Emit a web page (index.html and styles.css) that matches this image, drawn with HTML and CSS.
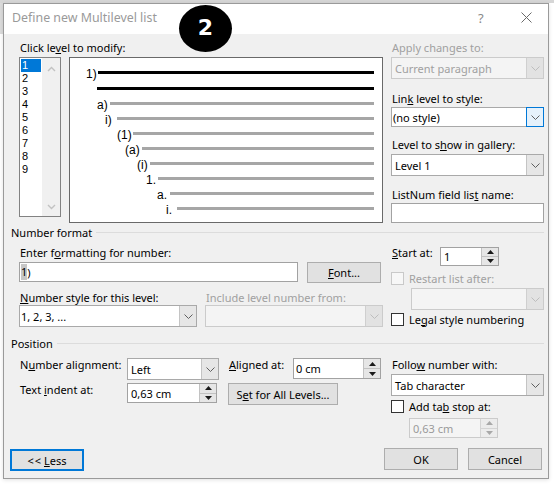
FILE: index.html
```html
<!DOCTYPE html>
<html lang="en">
<head>
<meta charset="utf-8">
<title>Define new Multilevel list</title>
<link rel="stylesheet" href="styles.css">
</head>
<body>
<div class="screen">
<div class="dialog">
  <div class="titlebar">
    <span class="title">Define new Multilevel list</span>
    <span class="tb-help">?</span>
    <span class="tb-close"><svg width="11" height="11" viewBox="0 0 11 11"><path d="M0.5 0.5 L10.5 10.5 M10.5 0.5 L0.5 10.5"/></svg></span>
  </div>
  <div class="badge">2</div>

  <div class="body">
    <div class="top">
      <div class="top-left">
        <div class="lbl">Click le<u>v</u>el to modify:</div>
        <div class="top-row">
          <div class="levels">
            <ul class="level-items">
              <li class="sel">1</li><li>2</li><li>3</li><li>4</li><li>5</li><li>6</li><li>7</li><li>8</li><li>9</li>
            </ul>
            <div class="vscroll">
              <svg class="sb-chev" width="9" height="6" viewBox="0 0 9 6"><polyline points="1,5 4.5,1.5 8,5"/></svg>
              <svg class="sb-chev" width="9" height="6" viewBox="0 0 9 6"><polyline points="1,1 4.5,4.5 8,1"/></svg>
            </div>
          </div>
          <div class="preview">
            <div class="pv-row r1"><span class="pv-num w12">1)</span><i class="pv-line black"></i></div>
            <div class="pv-row r2"><i class="pv-line black"></i></div>
            <div class="pv-row r3"><span class="pv-num w13">a)</span><i class="pv-line"></i></div>
            <div class="pv-row r4"><span class="pv-num w12">i)</span><i class="pv-line"></i></div>
            <div class="pv-row r5"><span class="pv-num w16">(1)</span><i class="pv-line"></i></div>
            <div class="pv-row r6"><span class="pv-num w17">(a)</span><i class="pv-line"></i></div>
            <div class="pv-row r7"><span class="pv-num w13">(i)</span><i class="pv-line"></i></div>
            <div class="pv-row r8"><span class="pv-num w12">1.</span><i class="pv-line"></i></div>
            <div class="pv-row r9"><span class="pv-num w13">a.</span><i class="pv-line"></i></div>
            <div class="pv-row r10"><span class="pv-num w11">i.</span><i class="pv-line"></i></div>
          </div>
        </div>
      </div>

      <div class="top-right">
        <div class="lbl dis">Apply changes to:</div>
        <div class="select dis apply-sel"><span class="val">Current paragraph</span><span class="dd"><svg class="chev" width="9" height="5" viewBox="0 0 9 5"><polyline points="0.5,0.5 4.5,4.5 8.5,0.5"/></svg></span></div>
        <div class="lbl link-lbl">Lin<u>k</u> level to style:</div>
        <div class="select link-sel"><span class="val tight">(no style)</span><span class="dd hot"><svg class="chev" width="9" height="5" viewBox="0 0 9 5"><polyline points="0.5,0.5 4.5,4.5 8.5,0.5"/></svg></span></div>
        <div class="lbl gallery-lbl">Level to s<u>h</u>ow in gallery:</div>
        <div class="select gallery-sel"><span class="val">Level 1</span><span class="dd"><svg class="chev" width="9" height="5" viewBox="0 0 9 5"><polyline points="0.5,0.5 4.5,4.5 8.5,0.5"/></svg></span></div>
        <div class="lbl listnum-lbl">ListNum field lis<u>t</u> name:</div>
        <div class="field listnum-field"></div>
      </div>
    </div>

    <div class="group group-nf"><span>Number format</span><i class="rule"></i></div>

    <div class="section numfmt">
      <div class="sec-left">
        <div class="lbl">Enter f<u>o</u>rmatting for number:</div>
        <div class="row fmt-row">
          <div class="field fmt-input"><span class="hl">1</span>)</div>
          <div class="btn font-btn"><span><u>F</u>ont...</span></div>
        </div>
        <div class="row style-labels">
          <div class="lbl style-lbl"><u>N</u>umber style for this level:</div>
          <div class="lbl dis">Include level number from:</div>
        </div>
        <div class="row style-row">
          <div class="select style-sel"><span class="val tight">1, 2, 3, ...</span><span class="dd"><svg class="chev" width="9" height="5" viewBox="0 0 9 5"><polyline points="0.5,0.5 4.5,4.5 8.5,0.5"/></svg></span></div>
          <div class="select dis include-sel"><span class="val"></span><span class="dd"><svg class="chev" width="9" height="5" viewBox="0 0 9 5"><polyline points="0.5,0.5 4.5,4.5 8.5,0.5"/></svg></span></div>
        </div>
      </div>
      <div class="sec-right">
        <div class="row">
          <div class="lbl start-lbl"><u>S</u>tart at:</div>
          <div class="spin start-spin"><span class="val">1</span><span class="spb"><i class="up"><svg width="7" height="4" viewBox="0 0 7 4"><polygon points="3.5,0 7,4 0,4"/></svg></i><i class="dn"><svg width="7" height="4" viewBox="0 0 7 4"><polygon points="0,0 7,0 3.5,4"/></svg></i></span></div>
        </div>
        <div class="check-row restart"><span class="cb off"></span><span class="lbl dis">Restart list after:</span></div>
        <div class="select dis restart-sel"><span class="val"></span><span class="dd"><svg class="chev" width="9" height="5" viewBox="0 0 9 5"><polyline points="0.5,0.5 4.5,4.5 8.5,0.5"/></svg></span></div>
        <div class="check-row legal"><span class="cb"></span><span class="lbl">Le<u>g</u>al style numbering</span></div>
      </div>
    </div>

    <div class="group group-pos"><span>Position</span><i class="rule"></i></div>

    <div class="section position">
      <div class="sec-left">
        <div class="row">
          <div class="lbl al-lbl">N<u>u</u>mber alignment:</div>
          <div class="select align-sel"><span class="val">Left</span><span class="dd"><svg class="chev" width="9" height="5" viewBox="0 0 9 5"><polyline points="0.5,0.5 4.5,4.5 8.5,0.5"/></svg></span></div>
          <div class="lbl aligned-lbl"><u>A</u>ligned at:</div>
          <div class="spin aligned-spin"><span class="val narrow">0 cm</span><span class="spb"><i class="up"><svg width="7" height="4" viewBox="0 0 7 4"><polygon points="3.5,0 7,4 0,4"/></svg></i><i class="dn"><svg width="7" height="4" viewBox="0 0 7 4"><polygon points="0,0 7,0 3.5,4"/></svg></i></span></div>
        </div>
        <div class="row indent-row">
          <div class="lbl al-lbl">Text <u>i</u>ndent at:</div>
          <div class="spin indent-spin"><span class="val">0,63 cm</span><span class="spb"><i class="up"><svg width="7" height="4" viewBox="0 0 7 4"><polygon points="3.5,0 7,4 0,4"/></svg></i><i class="dn"><svg width="7" height="4" viewBox="0 0 7 4"><polygon points="0,0 7,0 3.5,4"/></svg></i></span></div>
          <div class="btn setall-btn"><span>S<u>e</u>t for All Levels...</span></div>
        </div>
      </div>
      <div class="sec-right">
        <div class="lbl">Follo<u>w</u> number with:</div>
        <div class="select follow-sel"><span class="val">Tab character</span><span class="dd"><svg class="chev" width="9" height="5" viewBox="0 0 9 5"><polyline points="0.5,0.5 4.5,4.5 8.5,0.5"/></svg></span></div>
        <div class="check-row tabstop"><span class="cb"></span><span class="lbl">Add ta<u>b</u> stop at:</span></div>
        <div class="spin dis tab-spin"><span class="val tight">0,63 cm</span><span class="spb"><i class="up"><svg width="7" height="4" viewBox="0 0 7 4"><polygon points="3.5,0 7,4 0,4"/></svg></i><i class="dn"><svg width="7" height="4" viewBox="0 0 7 4"><polygon points="0,0 7,0 3.5,4"/></svg></i></span></div>
      </div>
    </div>

    <div class="buttons">
      <div class="btn default less-btn"><span>&lt;&#8202;&lt; <u>L</u>ess</span></div>
      <div class="btn ok-btn"><span>OK</span></div>
      <div class="btn cancel-btn"><span>Cancel</span></div>
    </div>
  </div>
</div>
</div>
</body>
</html>
```

FILE: styles.css
```css
* { box-sizing: border-box; }
html, body { margin: 0; padding: 0; }
body {
  width: 554px; height: 485px; overflow: hidden;
  background: #fff;
  font-family: "Noto Sans", "Open Sans", sans-serif;
  font-size: 11px; color: #000;
}
u { text-decoration: underline; text-underline-offset: 1px; }

.screen {
  height: 485px;
  padding: 3px 0 0 3px;
  background:
    linear-gradient(#d6d6d6, #d6d6d6) 0 0 / 554px 3px no-repeat,
    linear-gradient(#dcdcdc, #dcdcdc) 0 0 / 3px 34px no-repeat,
    #fff;
}
.dialog {
  position: relative;
  width: 546px; height: 476px;
  border: 1px solid #9a9a9a;
  background: #f0f0f0;
  display: flex; flex-direction: column;
  box-shadow: 0 1px 4px rgba(0,0,0,0.12);
}

/* title bar */
.titlebar {
  flex: none; height: 30px; background: #fff;
  display: flex; align-items: center;
  padding: 0 0 3px 8px;
}
.title { flex: 1; font-size: 12.4px; color: #9a9a9a; white-space: nowrap; }
.tb-help { width: 8px; margin-right: 35px; margin-left: -2px; font-size: 13px; line-height: 14px; color: #8a8a8a; }
.tb-close { width: 12px; margin-right: 15px; display: flex; }
.tb-close svg path { stroke: #6a6a6a; stroke-width: 1; fill: none; }

.badge {
  position: absolute; left: 175px; top: 1px;
  width: 53px; height: 47px; border-radius: 50%;
  background: #000; color: #fff;
  font-family: "DejaVu Sans", sans-serif; font-weight: bold; font-size: 22px;
  display: flex; align-items: center; justify-content: center;
  padding-bottom: 2px; z-index: 2;
}

/* body */
.body { flex: 1; display: flex; flex-direction: column; padding: 7px 4px 0 15px; }
.lbl { height: 14px; line-height: 14px; padding-left: 1px; white-space: nowrap; }
.dis { color: #a0a0a0; }
.row { display: flex; align-items: flex-start; }

/* top area */
.top { display: flex; }
.top-left { width: 364px; }
.top-row { display: flex; gap: 8px; margin-top: 2px; }
.levels {
  width: 42px; height: 160px;
  border: 1px solid #828282; background: #fff;
  display: flex;
}
.level-items {
  list-style: none; margin: 0; padding: 1px 0 0 1px; width: 22px;
  font-family: "Liberation Sans", Arial, sans-serif; font-size: 11px;
}
.level-items li { width: 20px; height: 13px; line-height: 13px; padding-left: 1px; }
.level-items li.sel { background: #0078d7; color: #fff; }
.vscroll {
  flex: 1; background: #f0f0f0;
  display: flex; flex-direction: column; justify-content: space-between; align-items: center;
  padding: 8px 0 6px;
}
.sb-chev polyline { fill: none; stroke: #c2c2c2; stroke-width: 1.4; }

.preview {
  width: 314px; height: 166px;
  border: 1px solid #696969; background: #fff;
  padding: 7px 8px 0 0;
  font-family: "Liberation Sans", Arial, sans-serif; font-size: 12px;
}
.pv-row { display: flex; align-items: center; height: 15px; }
.pv-num { margin-top: 3px; white-space: nowrap; flex: none; }
.pv-line { flex: 1; height: 3px; background: #a6a6a6; }
.pv-line.black { background: #000; }
.r1 { padding-left: 16px; }
.r2 { padding-left: 27px; margin-top: 1px; }
.r3 { padding-left: 27px; }
.r4 { padding-left: 35px; }
.r5 { padding-left: 47px; }
.r6 { padding-left: 55px; }
.r7 { padding-left: 67px; }
.r8 { padding-left: 76px; }
.r9 { padding-left: 87px; }
.r10 { padding-left: 96px; }
.w11 { width: 11px; } .w12 { width: 12px; } .w13 { width: 13px; }
.w16 { width: 16px; } .w17 { width: 17px; }

.top-right { width: 153px; margin-left: 8px; display: flex; flex-direction: column; }
.apply-sel { height: 22px; margin-top: 2px; }
.link-lbl { margin-top: 13px; }
.link-sel { height: 20px; margin-top: 1px; }
.gallery-lbl { margin-top: 11px; }
.gallery-sel { height: 22px; margin-top: 2px; }
.listnum-lbl { margin-top: 12px; }
.listnum-field { height: 20px; margin-top: 1px; }

/* controls */
.select { display: flex; border: 1px solid #a9a9a9; background: #fff; }
.select .val { flex: 1; display: flex; align-items: center; padding-left: 3px; white-space: nowrap; overflow: hidden; }
.val.tight { padding-left: 1px; }
.select .dd {
  width: 17px; flex: none; background: #e6e6e6; border-left: 1px solid #c4c4c4;
  display: flex; align-items: center; justify-content: center;
}
.select .dd.hot { background: #e5f1fb; border: 1px solid #0078d7; margin: -1px -1px -1px 0; width: 18px; }
.chev polyline { fill: none; stroke: #5f5f5f; stroke-width: 1; }
.select.dis { background: #f4f4f4; border-color: #cbcbcb; color: #a0a0a0; }
.select.dis .dd { background: #e2e2e2; border-left-color: #cfcfcf; }
.select.dis .chev polyline { stroke: #bdbdbd; }

.field { border: 1px solid #a2a2a2; background: #fff; display: flex; align-items: center; padding-left: 1px; }
.hl { background: #c6c6c6; line-height: 16px; }

.spin { display: flex; border: 1px solid #a2a2a2; background: #fff; }
.spin .val { flex: 1; display: flex; align-items: center; padding-left: 3px; white-space: nowrap; }
.spin .val.narrow { padding-left: 2px; }
.spb {
  width: 17px; flex: none; display: flex; flex-direction: column;
  border-left: 1px solid #c2c2c2; background: #e6e6e6;
}
.spb i { flex: 1; display: flex; align-items: center; justify-content: center; }
.spb i.dn { border-top: 1px solid #c2c2c2; }
.spb polygon { fill: #1a1a1a; }
.spin.dis { background: #f4f4f4; border-color: #cbcbcb; color: #9a9a9a; }
.spin.dis .spb { background: #ececec; border-left-color: #d4d4d4; }
.spin.dis .spb i.dn { border-top-color: #d4d4d4; }
.spin.dis .spb polygon { fill: #a8a8a8; }

.btn {
  border: 1px solid #adadad; background: #e1e1e1;
  display: flex; align-items: center; justify-content: center;
  white-space: nowrap;
}
.btn.default { border: 2px solid #0078d7; }

.check-row { display: flex; align-items: center; height: 13px; }
.check-row .lbl { margin-left: 5px; padding-left: 0; }
.cb { width: 13px; height: 13px; flex: none; border: 1px solid #333; background: #fff; }
.cb.off { border-color: #c9c9c9; background: #f7f7f7; }

/* group headers */
.group {
  display: flex; align-items: center;
  height: 14px; line-height: 14px; margin-left: -8px; white-space: nowrap;
}
.group .rule { flex: 1; height: 1px; background: #dcdcdc; margin: -2px 0 0 4px; }
.group-nf { margin-top: 3px; }
.group-pos { margin-top: 10px; }

/* sections */
.section { display: flex; }
.sec-left { width: 364px; }
.sec-right { width: 153px; margin-left: 8px; }

.numfmt { margin-top: 6px; }
.fmt-row { margin-top: 2px; }
.fmt-input { width: 279px; height: 20px; }
.font-btn { width: 74px; height: 21px; margin-left: 9px; }
.style-labels { margin-top: 8px; }
.style-lbl { width: 186px; }
.style-sel { width: 178px; height: 22px; }
.include-sel { width: 178px; height: 22px; margin-left: 8px; }
.start-lbl { width: 49px; }
.start-spin { width: 59px; height: 19px; margin-top: 1px; }
.restart { margin-top: 6px; }
.restart-sel { width: 133px; height: 22px; margin: 3px 0 0 20px; }
.legal { margin-top: 3px; }

.position { margin-top: 7px; }
.al-lbl { width: 108px; }
.align-sel { width: 92px; height: 22px; }
.aligned-lbl { width: 65px; margin-left: 9px; }
.aligned-spin { width: 88px; height: 21px; }
.indent-row { margin-top: 3px; }
.indent-spin { width: 90px; height: 20px; }
.setall-btn { width: 110px; height: 22px; margin-left: 11px; }
.follow-sel { height: 22px; margin-top: 2px; }
.tabstop { margin-top: 4px; }
.tab-spin { width: 89px; height: 20px; margin: 5px 0 0 18px; }

.buttons { display: flex; align-items: flex-start; margin-top: 10px; }
.less-btn { width: 74px; height: 22px; margin: 1px 0 0 -9px; }
.ok-btn { width: 74px; height: 22px; margin-left: auto; }
.cancel-btn { width: 74px; height: 22px; margin: 0 2px 0 10px; }
```
